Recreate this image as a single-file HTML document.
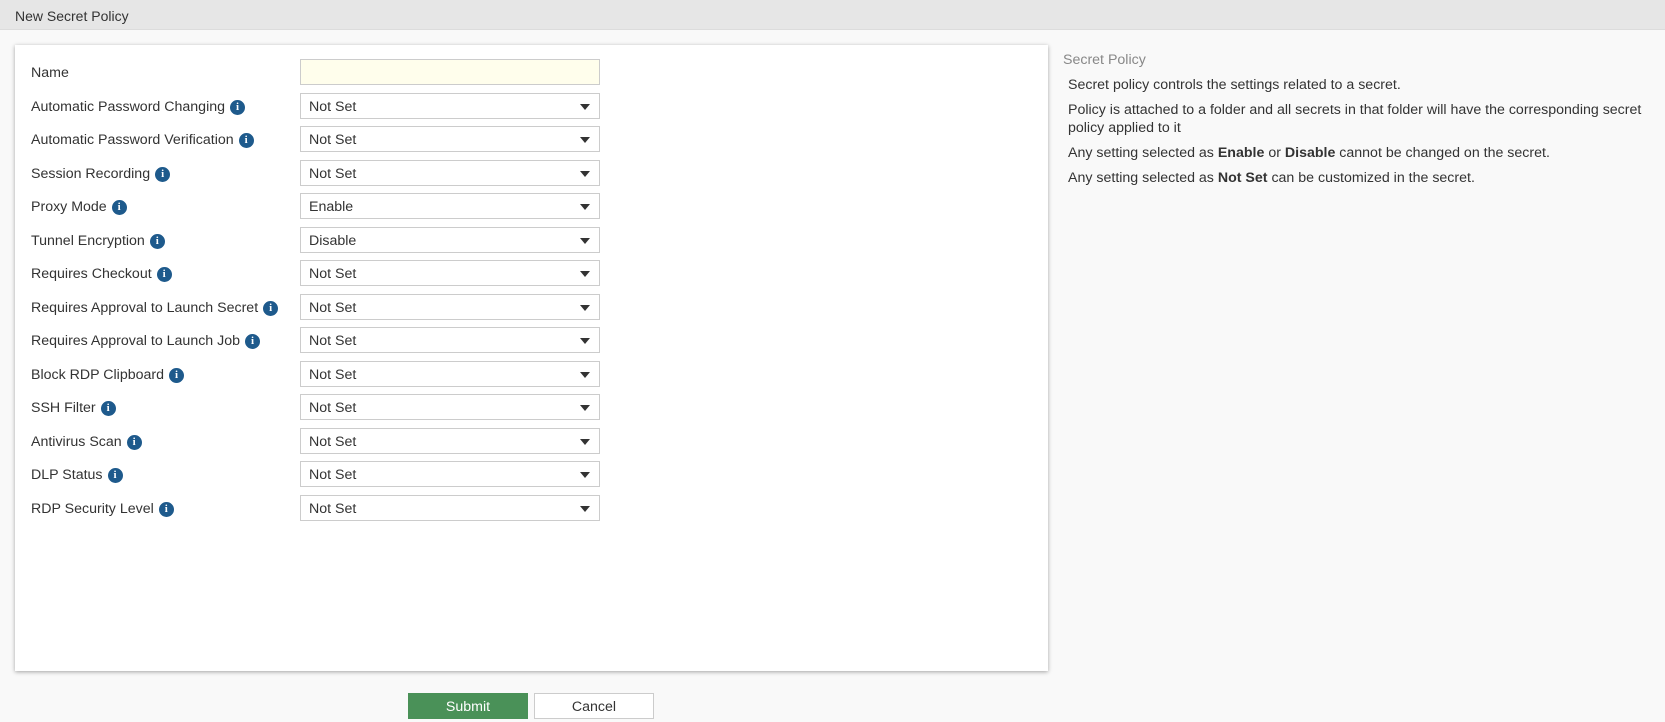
<!DOCTYPE html>
<html><head><meta charset="utf-8"><style>
body{margin:0;width:1665px;height:721px;background:#f9f9f9;font-family:"Liberation Sans",sans-serif;color:#333;overflow:hidden;position:relative}
.hdr{position:absolute;left:0;top:0;width:1665px;height:29px;background:#e6e6e6;border-bottom:1px solid #dcdcdc}
.hdr span{position:absolute;left:15px;top:8px;font-size:14px;color:#333}
.card{position:absolute;left:15px;top:45px;width:1033px;height:626px;background:#fff;box-shadow:0 1px 4px rgba(0,0,0,.35)}
.lbl{position:absolute;left:31px;font-size:14.2px;color:#333;white-space:nowrap;line-height:18px}
.i{display:inline-block;width:15px;height:15px;border-radius:50%;background:#1e5a8c;color:#fff;font:bold 11px/15px "Liberation Serif",serif;text-align:center;vertical-align:1px;margin-left:5px}
.sel{position:absolute;left:300px;width:298px;height:24px;border:1px solid #ccc;background:#fff;font-size:14.2px;line-height:27px;text-indent:8px}
.sel:after{content:"";position:absolute;right:9px;top:10px;border-left:5px solid transparent;border-right:5px solid transparent;border-top:6px solid #333}
.name{position:absolute;left:300px;top:59px;width:298px;height:24px;border:1px solid #ccc;background:#fffeec}
.rt{position:absolute;left:1068px;font-size:14.2px;color:#333;white-space:nowrap;line-height:18px}
.btn{position:absolute;top:693px;height:26px;width:120px;font-size:14.2px;text-align:center;line-height:29px;box-sizing:border-box}
</style></head><body>
<div class="hdr"><span>New Secret Policy</span></div>
<div class="card"></div>
<div class="lbl" style="top:64px">Name</div>
<div class="name"></div>

<div class="lbl" style="top:98px">Automatic Password Changing<span class="i">i</span></div><div class="sel" style="top:93px">Not Set</div>
<div class="lbl" style="top:131px">Automatic Password Verification<span class="i">i</span></div><div class="sel" style="top:126px">Not Set</div>
<div class="lbl" style="top:165px">Session Recording<span class="i">i</span></div><div class="sel" style="top:160px">Not Set</div>
<div class="lbl" style="top:198px">Proxy Mode<span class="i">i</span></div><div class="sel" style="top:193px">Enable</div>
<div class="lbl" style="top:232px">Tunnel Encryption<span class="i">i</span></div><div class="sel" style="top:227px">Disable</div>
<div class="lbl" style="top:265px">Requires Checkout<span class="i">i</span></div><div class="sel" style="top:260px">Not Set</div>
<div class="lbl" style="top:299px">Requires Approval to Launch Secret<span class="i">i</span></div><div class="sel" style="top:294px">Not Set</div>
<div class="lbl" style="top:332px">Requires Approval to Launch Job<span class="i">i</span></div><div class="sel" style="top:327px">Not Set</div>
<div class="lbl" style="top:366px">Block RDP Clipboard<span class="i">i</span></div><div class="sel" style="top:361px">Not Set</div>
<div class="lbl" style="top:399px">SSH Filter<span class="i">i</span></div><div class="sel" style="top:394px">Not Set</div>
<div class="lbl" style="top:433px">Antivirus Scan<span class="i">i</span></div><div class="sel" style="top:428px">Not Set</div>
<div class="lbl" style="top:466px">DLP Status<span class="i">i</span></div><div class="sel" style="top:461px">Not Set</div>
<div class="lbl" style="top:500px">RDP Security Level<span class="i">i</span></div><div class="sel" style="top:495px">Not Set</div>

<div class="rt" style="left:1063px;top:51px;color:#888">Secret Policy</div>
<div class="rt" style="top:76px">Secret policy controls the settings related to a secret.</div>
<div class="rt" style="top:101px">Policy is attached to a folder and all secrets in that folder will have the corresponding secret</div>
<div class="rt" style="top:119px">policy applied to it</div>
<div class="rt" style="top:144px">Any setting selected as <b>Enable</b> or <b>Disable</b> cannot be changed on the secret.</div>
<div class="rt" style="top:169px">Any setting selected as <b>Not Set</b> can be customized in the secret.</div>

<div class="btn" style="left:408px;background:#4a9158;color:#fff">Submit</div>
<div class="btn" style="left:534px;background:#fff;border:1px solid #ccc;color:#333;line-height:27px">Cancel</div>
</body></html>
